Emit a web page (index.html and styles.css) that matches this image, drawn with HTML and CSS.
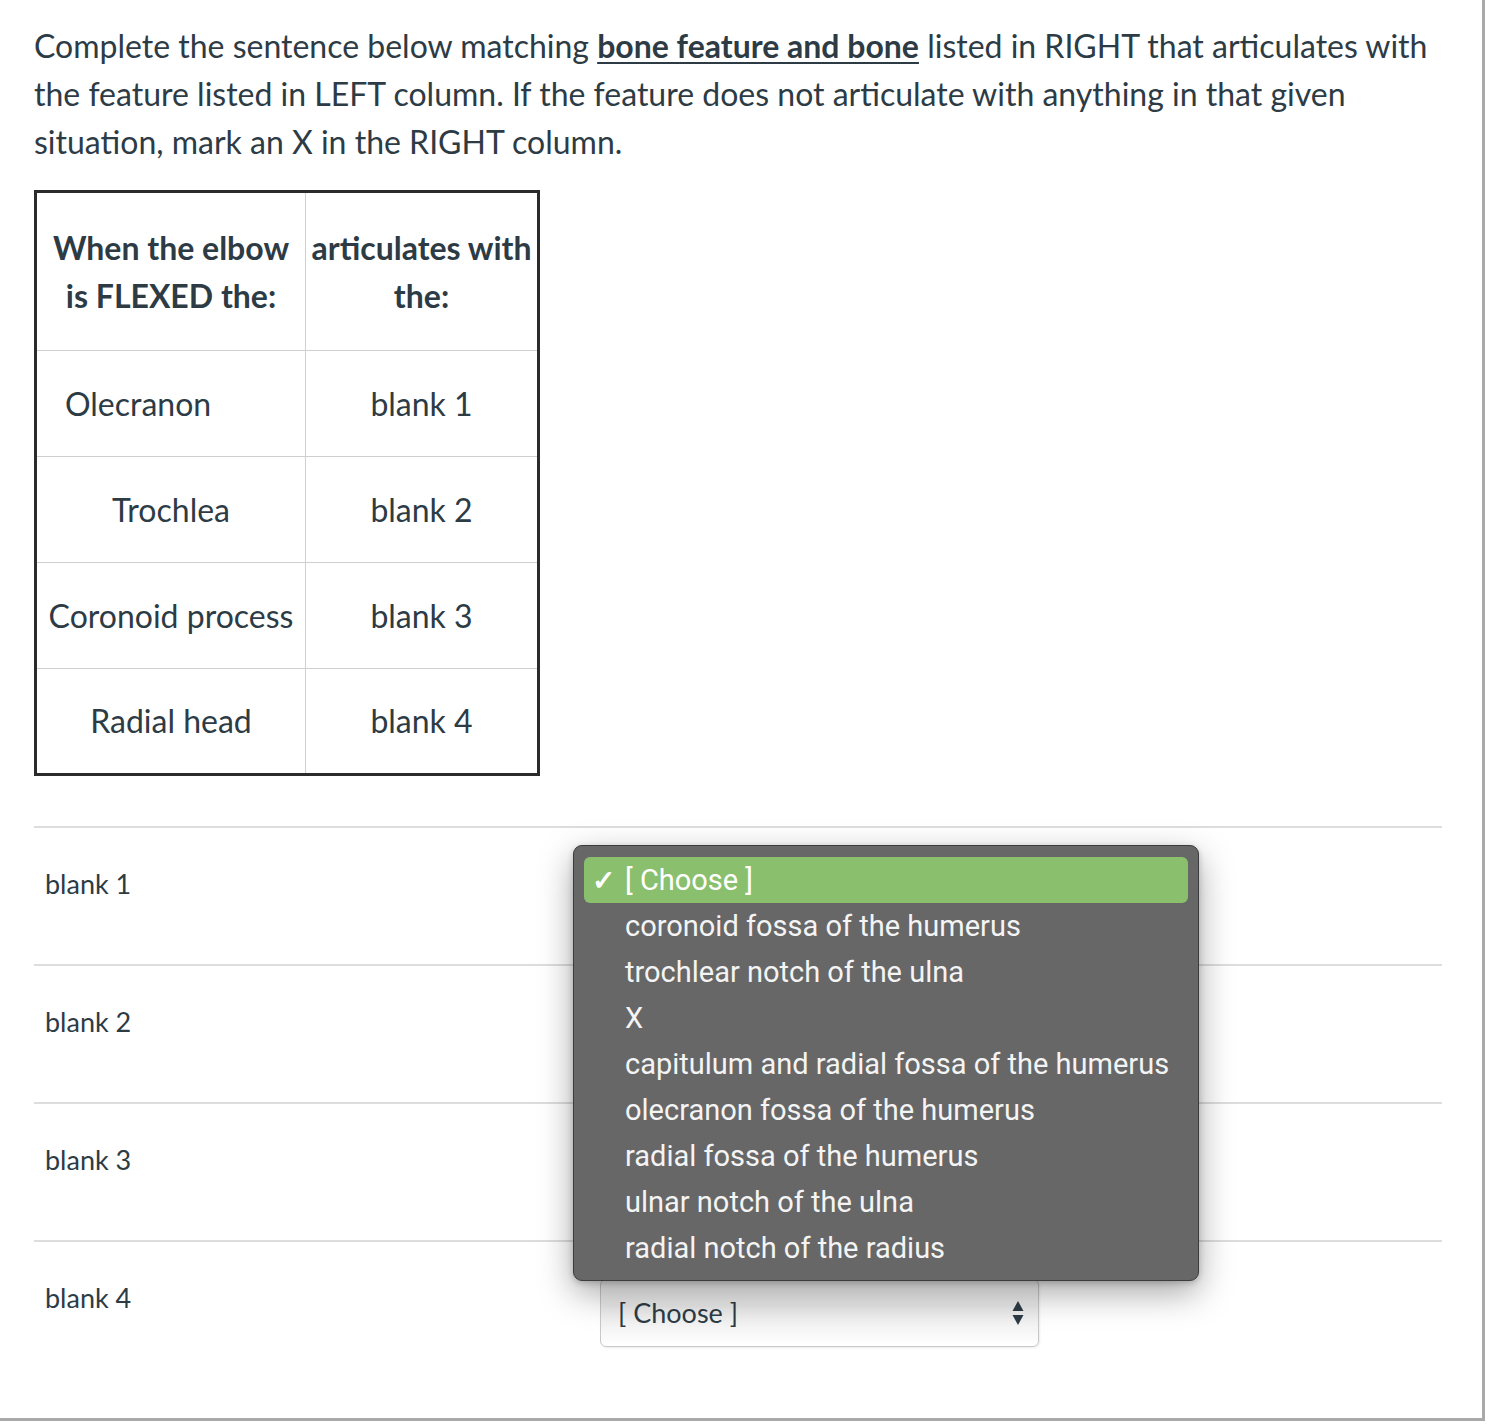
FILE: index.html
```html
<!DOCTYPE html>
<html>
<head>
<meta charset="utf-8">
<link rel="stylesheet" href="styles.css">
</head>
<body>
<div class="page">
  <p class="intro">Complete the sentence below matching <strong class="ul">bone feature and bone</strong> listed in RIGHT that articulates with the feature listed in LEFT column. If the feature does not articulate with anything in that given situation, mark an X in the RIGHT column.</p>

  <table class="grid">
    <thead>
      <tr>
        <th class="c1">When the elbow<br>is FLEXED the:</th>
        <th class="c2">articulates with<br>the:</th>
      </tr>
    </thead>
    <tbody>
      <tr><td class="c1 left">Olecranon</td><td class="c2">blank 1</td></tr>
      <tr><td class="c1">Trochlea</td><td class="c2">blank 2</td></tr>
      <tr><td class="c1">Coronoid process</td><td class="c2">blank 3</td></tr>
      <tr><td class="c1">Radial head</td><td class="c2">blank 4</td></tr>
    </tbody>
  </table>

  <div class="answers">
    <div class="arow">
      <div class="alabel">blank 1</div>
      <div class="select"><span>[ Choose ]</span><svg class="arrows" width="12" height="26" viewBox="0 0 12 26"><path d="M6 1 L11.5 11 H0.5 Z M6 25 L11.5 15 H0.5 Z" fill="#2d3b45"/></svg></div>
    </div>
    <div class="arow">
      <div class="alabel">blank 2</div>
      <div class="select"><span>[ Choose ]</span><svg class="arrows" width="12" height="26" viewBox="0 0 12 26"><path d="M6 1 L11.5 11 H0.5 Z M6 25 L11.5 15 H0.5 Z" fill="#2d3b45"/></svg></div>
    </div>
    <div class="arow">
      <div class="alabel">blank 3</div>
      <div class="select"><span>[ Choose ]</span><svg class="arrows" width="12" height="26" viewBox="0 0 12 26"><path d="M6 1 L11.5 11 H0.5 Z M6 25 L11.5 15 H0.5 Z" fill="#2d3b45"/></svg></div>
    </div>
    <div class="arow last">
      <div class="alabel">blank 4</div>
      <div class="select"><span>[ Choose ]</span><svg class="arrows" width="12" height="26" viewBox="0 0 12 26"><path d="M6 1 L11.5 11 H0.5 Z M6 25 L11.5 15 H0.5 Z" fill="#2d3b45"/></svg></div>
    </div>
  </div>

  <div class="menu">
    <div class="opt sel"><span class="check">✓</span>[ Choose ]</div>
    <div class="opt">coronoid fossa of the humerus</div>
    <div class="opt">trochlear notch of the ulna</div>
    <div class="opt">X</div>
    <div class="opt">capitulum and radial fossa of the humerus</div>
    <div class="opt">olecranon fossa of the humerus</div>
    <div class="opt">radial fossa of the humerus</div>
    <div class="opt">ulnar notch of the ulna</div>
    <div class="opt">radial notch of the radius</div>
  </div>
</div>
</body>
</html>
```

FILE: styles.css
```css
html, body {
  margin: 0;
  padding: 0;
  background: #fff;
}

.page {
  position: relative;
  box-sizing: border-box;
  width: 1485px;
  height: 1421px;
  padding: 22px 40px 0 34px;
  border-right: 3px solid #a9a9a9;
  border-bottom: 3px solid #a9a9a9;
  font-family: Lato, "Open Sans", sans-serif;
  color: #2d3b45;
}

.intro {
  margin: 0;
  font-size: 32px;
  line-height: 48px;
}

.ul {
  font-weight: bold;
  text-decoration: underline;
  text-decoration-thickness: 2px;
  text-underline-offset: 4px;
}

.grid {
  margin-top: 24px;
  border-collapse: collapse;
  border: 3px solid #2b2b2b;
  font-size: 32px;
  line-height: 48px;
}

.grid th, .grid td {
  border: 1px solid #cfcfcf;
  text-align: center;
  padding: 0;
  box-sizing: border-box;
}

.grid th {
  font-weight: bold;
  height: 159px;
}

.grid td {
  height: 106px;
  font-weight: normal;
}

.grid .c1 { width: 270px; }
.grid .c2 { width: 233px; }

.grid td.left {
  text-align: left;
  padding-left: 28px;
}

.answers {
  margin-top: 50px;
  width: 1408px;
}

.arow {
  display: flex;
  height: 138px;
  border-top: 2px solid #dddddd;
  box-sizing: border-box;
  font-size: 27px;
}

.alabel {
  width: 555px;
  padding-left: 11px;
  padding-top: 36px;
  line-height: 40px;
}

.select {
  margin-top: 37px;
  box-sizing: border-box;
  width: 439px;
  height: 68px;
  border: 1px solid #c6c8ca;
  border-radius: 6px;
  background: linear-gradient(#f7f7f7, #e9e9e9 40%, #ffffff);
  display: flex;
  align-items: center;
  justify-content: space-between;
  padding: 0 14px 0 17px;
  color: #2d3b45;
  box-shadow: 1px 1px 2px rgba(0,0,0,0.08);
}

.select span {
  line-height: 40px;
}

.menu {
  position: absolute;
  left: 573px;
  top: 845px;
  width: 626px;
  box-sizing: border-box;
  padding: 11px 10px 9px 10px;
  background: #676767;
  border: 1px solid #3c3c3c;
  border-radius: 9px;
  box-shadow: 0 12px 34px rgba(0,0,0,0.35), 0 2px 6px rgba(0,0,0,0.2);
  font-family: Roboto, "Liberation Sans", sans-serif;
  font-size: 29px;
  color: #f4f4f4;
}

.opt {
  height: 46px;
  line-height: 46px;
  padding-left: 41px;
  border-radius: 6px;
  white-space: nowrap;
}

.opt.sel {
  background: #8ac06d;
  padding-left: 8px;
  color: #ffffff;
}

.check {
  display: inline-block;
  width: 33px;
  font-size: 28px;
  font-weight: bold;
}
```
